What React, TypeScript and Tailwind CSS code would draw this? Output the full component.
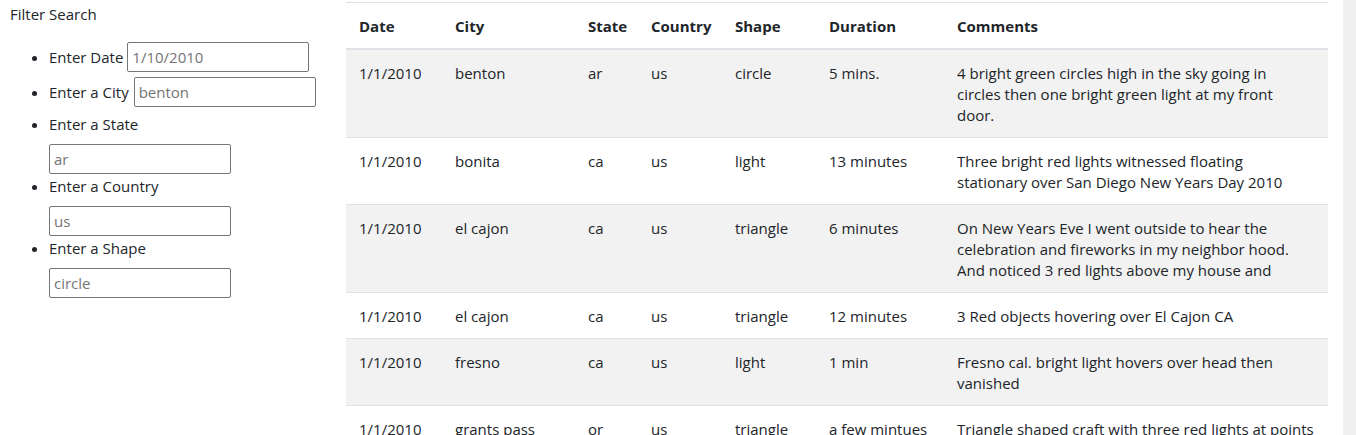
import React from 'react';

interface Sighting {
  date: string;
  city: string;
  state: string;
  country: string;
  shape: string;
  duration: string;
  comments: string[];
}

const sightings: Sighting[] = [
  {
    date: '1/1/2010',
    city: 'benton',
    state: 'ar',
    country: 'us',
    shape: 'circle',
    duration: '5 mins.',
    comments: ['4 bright green circles high in the sky going in', 'circles then one bright green light at my front', 'door.'],
  },
  {
    date: '1/1/2010',
    city: 'bonita',
    state: 'ca',
    country: 'us',
    shape: 'light',
    duration: '13 minutes',
    comments: ['Three bright red lights witnessed floating', 'stationary over San Diego New Years Day 2010'],
  },
  {
    date: '1/1/2010',
    city: 'el cajon',
    state: 'ca',
    country: 'us',
    shape: 'triangle',
    duration: '6 minutes',
    comments: ['On New Years Eve I went outside to hear the', 'celebration and fireworks in my neighbor hood.', 'And noticed 3 red lights above my house and'],
  },
  {
    date: '1/1/2010',
    city: 'el cajon',
    state: 'ca',
    country: 'us',
    shape: 'triangle',
    duration: '12 minutes',
    comments: ['3 Red objects hovering over El Cajon CA'],
  },
  {
    date: '1/1/2010',
    city: 'fresno',
    state: 'ca',
    country: 'us',
    shape: 'light',
    duration: '1 min',
    comments: ['Fresno cal. bright light hovers over head then', 'vanished'],
  },
  {
    date: '1/1/2010',
    city: 'grants pass',
    state: 'or',
    country: 'us',
    shape: 'triangle',
    duration: 'a few mintues',
    comments: ['Triangle shaped craft with three red lights at points'],
  },
];

const headers = ['Date', 'City', 'State', 'Country', 'Shape', 'Duration', 'Comments'];

const inputClass =
  'w-[182px] h-[30px] border border-[#767676] rounded-[2px] px-[4px] text-[15px] placeholder:text-[#757575] outline-none bg-white';

export default function App() {
  return (
    <div
      className="flex h-[435px] overflow-hidden bg-white text-[#212529] text-[15px] leading-[21px]"
      style={{ fontFamily: '"Open Sans", "Liberation Sans", sans-serif' }}
    >
      {/* Filter sidebar */}
      <div className="w-[346px] shrink-0">
        <div className="pl-[10px] pt-[4px]">Filter Search</div>
        <ul className="list-disc ml-[9px] pl-[40px] mt-[15px]">
          <li>
            <div className="flex items-center gap-[4px] pt-[2px] pb-[3px]">
              <span>Enter Date</span>
              <input className={inputClass} placeholder="1/10/2010" />
            </div>
          </li>
          <li>
            <div className="flex items-center gap-[5px] pt-[2px] pb-[3px]">
              <span>Enter a City</span>
              <input className={inputClass} placeholder="benton" />
            </div>
          </li>
          <li className="pt-[4px]">
            <div>Enter a State</div>
            <input className={`${inputClass} mt-[9px] block`} placeholder="ar" />
          </li>
          <li className="pt-[2px]">
            <div>Enter a Country</div>
            <input className={`${inputClass} mt-[9px] block`} placeholder="us" />
          </li>
          <li className="pt-[2px]">
            <div>Enter a Shape</div>
            <input className={`${inputClass} mt-[9px] block`} placeholder="circle" />
          </li>
        </ul>
      </div>

      {/* Results table */}
      <div className="w-[982px] shrink-0 pt-[2px]">
        <table className="w-full table-fixed border-collapse">
          <colgroup>
            <col className="w-[96px]" />
            <col className="w-[133px]" />
            <col className="w-[63px]" />
            <col className="w-[84px]" />
            <col className="w-[94px]" />
            <col className="w-[128px]" />
            <col />
          </colgroup>
          <thead>
            <tr className="border-t border-[#dee2e6]">
              {headers.map((h) => (
                <th
                  key={h}
                  className="text-left font-bold pl-[13px] pr-[11px] pt-[13px] pb-[11px] border-b-2 border-[#dee2e6] align-bottom"
                >
                  {h}
                </th>
              ))}
            </tr>
          </thead>
          <tbody>
            {sightings.map((s, i) => (
              <tr key={i} className={`border-t border-[#dee2e6] ${i % 2 === 0 ? 'bg-[#f2f2f2]' : 'bg-white'}`}>
                <td className="pl-[13px] pr-[11px] pt-[13px] pb-[11px] align-top">{s.date}</td>
                <td className="pl-[13px] pr-[11px] pt-[13px] pb-[11px] align-top">{s.city}</td>
                <td className="pl-[13px] pr-[11px] pt-[13px] pb-[11px] align-top">{s.state}</td>
                <td className="pl-[13px] pr-[11px] pt-[13px] pb-[11px] align-top">{s.country}</td>
                <td className="pl-[13px] pr-[11px] pt-[13px] pb-[11px] align-top">{s.shape}</td>
                <td className="pl-[13px] pr-[11px] pt-[13px] pb-[11px] align-top whitespace-nowrap">{s.duration}</td>
                <td className="pl-[13px] pr-[11px] pt-[13px] pb-[11px] align-top">
                  {s.comments.map((line, j) => (
                    <div key={j} className="whitespace-nowrap">
                      {line}
                    </div>
                  ))}
                </td>
              </tr>
            ))}
          </tbody>
        </table>
      </div>

      <div className="w-[15px] shrink-0" />
      {/* scrollbar track */}
      <div className="flex-1 bg-[#f0f0f0]" />
    </div>
  );
}
